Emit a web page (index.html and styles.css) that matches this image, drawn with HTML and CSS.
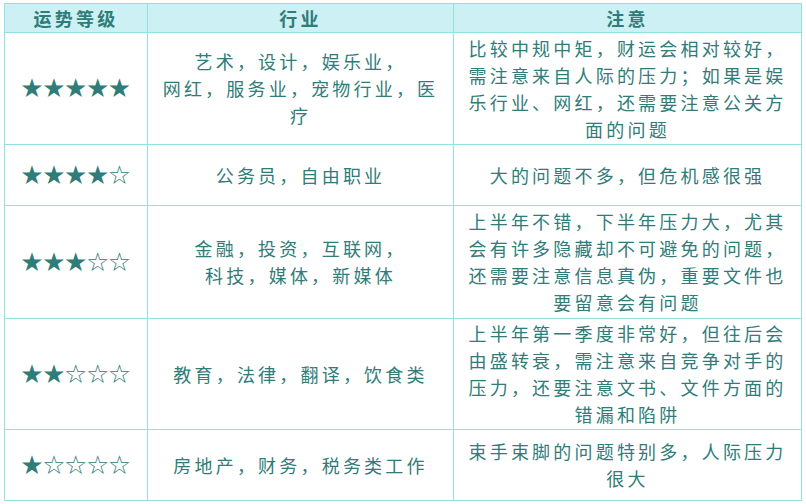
FILE: index.html
```html
<!DOCTYPE html>
<html lang="zh">
<head>
<meta charset="utf-8">
<link rel="stylesheet" href="styles.css">
</head>
<body>
<table class="fortune">
  <colgroup>
    <col class="c1"><col class="c2"><col class="c3">
  </colgroup>
  <thead>
    <tr class="head"><th>运势等级</th><th>行业</th><th>注意</th></tr>
  </thead>
  <tbody>
    <tr class="r1">
      <td class="stars">★★★★★</td>
      <td>艺术，设计，娱乐业，<br>网红，服务业，宠物行业，医<br>疗</td>
      <td>比较中规中矩，财运会相对较好，<br>需注意来自人际的压力；如果是娱<br>乐行业、网红，还需要注意公关方<br>面的问题</td>
    </tr>
    <tr class="r2">
      <td class="stars">★★★★☆</td>
      <td>公务员，自由职业</td>
      <td>大的问题不多，但危机感很强</td>
    </tr>
    <tr class="r3">
      <td class="stars">★★★☆☆</td>
      <td>金融，投资，互联网，<br>科技，媒体，新媒体</td>
      <td>上半年不错，下半年压力大，尤其<br>会有许多隐藏却不可避免的问题，<br>还需要注意信息真伪，重要文件也<br>要留意会有问题</td>
    </tr>
    <tr class="r4">
      <td class="stars">★★☆☆☆</td>
      <td>教育，法律，翻译，饮食类</td>
      <td>上半年第一季度非常好，但往后会<br>由盛转衰，需注意来自竞争对手的<br>压力，还要注意文书、文件方面的<br>错漏和陷阱</td>
    </tr>
    <tr class="r5">
      <td class="stars">★☆☆☆☆</td>
      <td>房地产，财务，税务类工作</td>
      <td>束手束脚的问题特别多，人际压力<br>很大</td>
    </tr>
  </tbody>
</table>
</body>
</html>
```

FILE: styles.css
```css
html, body {
  margin: 0;
  padding: 0;
  background: #ffffff;
}

body {
  padding: 3px 0 0 4px;
  font-family: "Noto Sans CJK SC", "DejaVu Sans", sans-serif;
}

.fortune {
  border-collapse: collapse;
  width: 797px;
  table-layout: fixed;
  color: #2f7c78;
  font-size: 18px;
  line-height: 27px;
  letter-spacing: 3.2px;
}

.c1 { width: 143px; }
.c2 { width: 306px; }
.c3 { width: 348px; }

.fortune th,
.fortune td {
  border: 1.5px solid #92e2e2;
  text-align: center;
  vertical-align: middle;
  padding: 0 4px;
  white-space: nowrap;
}

.fortune th {
  background: #ccf0f4;
  font-weight: bold;
  height: 27px;
  line-height: 24px;
  padding: 0 4px 1px;
}

.r1 td { height: 111px; }
.r2 td { height: 60px; }
.r3 td { height: 112px; }
.r4 td { height: 110px; }
.r5 td { height: 70px; }

.fortune .stars {
  font-family: "DejaVu Sans", sans-serif;
  font-size: 26px;
  line-height: 27px;
  letter-spacing: -1.4px;
  padding-left: 2px;
}
```
